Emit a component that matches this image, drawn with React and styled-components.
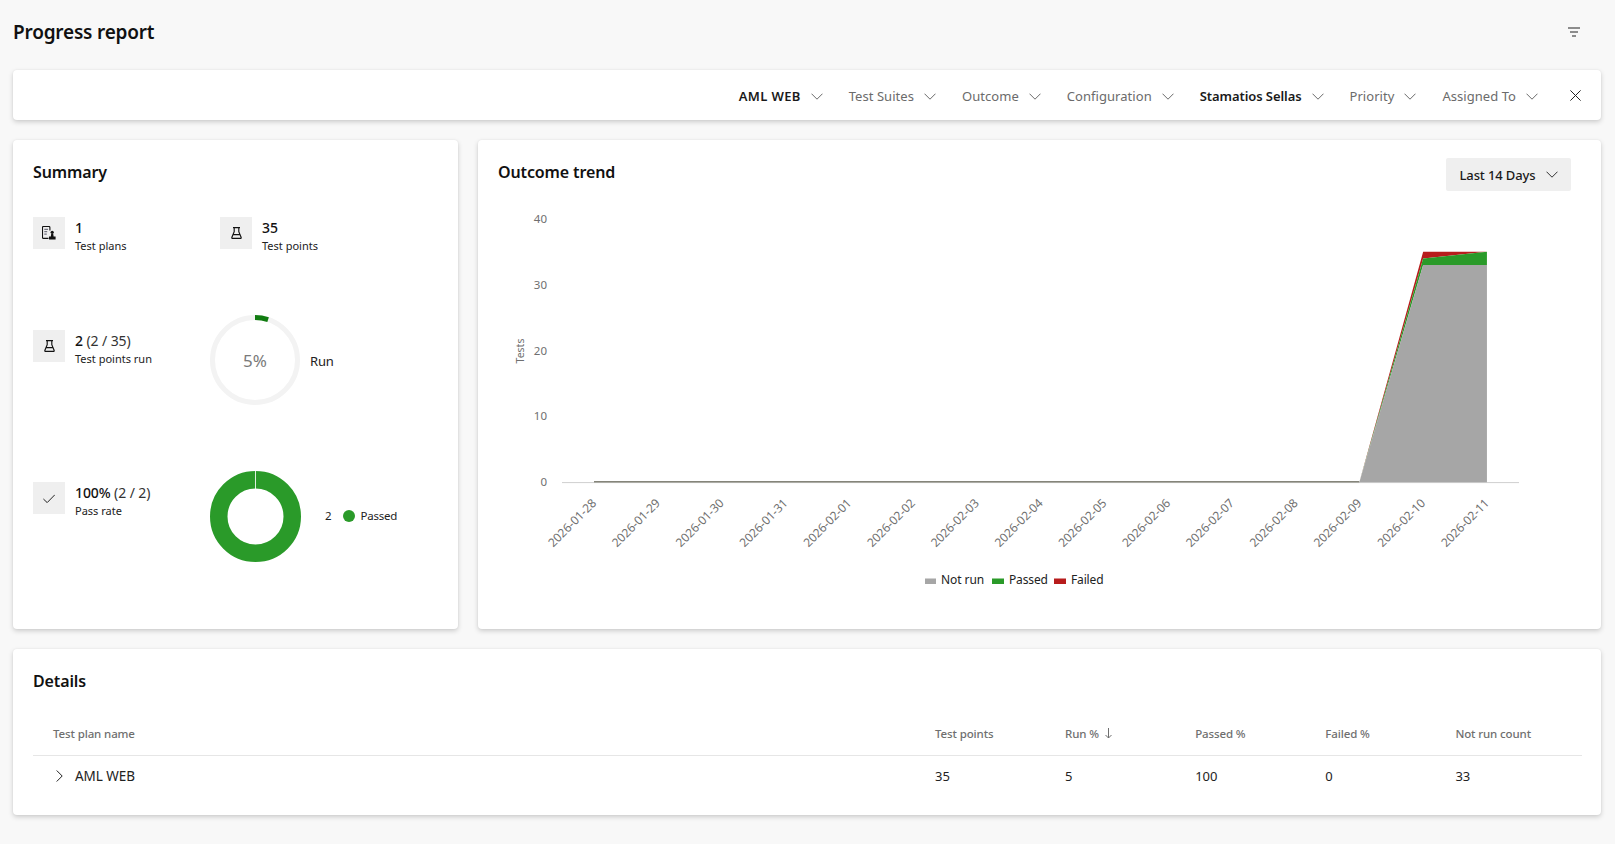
import React from 'react'
import styled, { createGlobalStyle } from 'styled-components'

const GlobalStyle = createGlobalStyle`
  html, body { margin: 0; padding: 0; background: #f8f8f8; height: 100%; overflow: hidden; }
  body { font-family: "Noto Sans", "Open Sans", sans-serif; color: #1a1a1a; }
`

const Page = styled.div`
  padding: 0 14px 0 13px;
  width: 1588px;
`
const Header = styled.header`
  height: 70px;
  display: flex;
  align-items: center;
  justify-content: space-between;
  padding: 0 21px 6px 0;
  box-sizing: border-box;
`
const PageTitle = styled.h1`
  margin: 0;
  font-size: 19px;
  font-weight: 600;
  letter-spacing: -0.2px;
  color: #111;
`
const FilterBar = styled.div`
  height: 50px;
  display: flex;
  align-items: center;
  justify-content: flex-end;
  padding: 0 20px 0 0;
  background: #fff;
  border-radius: 4px;
  box-shadow: 0 2px 5px rgba(0, 0, 0, 0.18), 0 0 2px rgba(0, 0, 0, 0.06);
`
const FilterList = styled.div`
  display: flex;
  gap: 26px;
  margin-right: 32px;
  padding-top: 2px;
`
const FilterItem = styled.div`
  display: flex;
  align-items: center;
  gap: 10px;
  font-size: 13px;
  letter-spacing: ${p => p.$spacing}px;
  font-weight: ${p => (p.$active ? 600 : 400)};
  color: ${p => (p.$active ? '#1a1a1a' : '#6b6b6b')};
`
const CardRow = styled.div`
  display: flex;
  gap: 20px;
  margin-top: 20px;
`
const Card = styled.section`
  background: #fff;
  border-radius: 4px;
  box-shadow: 0 2px 5px rgba(0, 0, 0, 0.18), 0 0 2px rgba(0, 0, 0, 0.06);
  box-sizing: border-box;
`
const SummaryCard = styled(Card)`
  width: 445px;
  height: 489px;
  padding: 20px;
`
const TrendCard = styled(Card)`
  width: 1123px;
  height: 489px;
`
const DetailsCard = styled(Card)`
  height: 166px;
  margin-top: 20px;
  padding: 20px 20px 0;
`
const CardTitle = styled.h2`
  margin: 0;
  font-size: 16px;
  line-height: 24px;
  font-weight: 600;
  letter-spacing: -0.12px;
  color: #111;
`
const SummaryBody = styled.div`
  display: flex;
  flex-direction: column;
  gap: 66px;
  margin-top: 33px;
`
const SummaryRow = styled.div`
  display: flex;
  align-items: flex-start;
`
const Stat = styled.div`
  display: flex;
  gap: 10px;
  height: 32px;
  flex: none;
  width: ${p => p.$width || 177}px;
  margin-top: ${p => p.$top || 0}px;
`
const IconBox = styled.div`
  width: 32px;
  height: 32px;
  flex: none;
  background: #efefef;
  display: flex;
  align-items: center;
  justify-content: center;
`
const StatText = styled.div`
  padding-top: 1px;
`
const StatValue = styled.div`
  font-size: 14px;
  line-height: 20px;
  font-weight: 500;
  letter-spacing: -0.1px;
  color: #111;
`
const StatExtra = styled.span`
  font-size: 14px;
  font-weight: 400;
  letter-spacing: -0.1px;
  color: #333;
`
const StatLabel = styled.div`
  font-size: 11px;
  line-height: 16px;
  letter-spacing: 0;
  color: #222;
`
const DonutWrap = styled.div`
  display: flex;
  align-items: center;
  gap: ${p => p.$gap}px;
`
const Donut = styled.div`
  position: relative;
  width: ${p => p.$size}px;
  height: ${p => p.$size}px;
  flex: none;
`
const DonutCenter = styled.div`
  position: absolute;
  inset: 0;
  display: flex;
  align-items: center;
  justify-content: center;
  font-size: 17px;
  color: #7a7a7a;
`
const RunLabel = styled.span`
  font-size: 13px;
  letter-spacing: -0.15px;
  color: #222;
  padding-top: 2px;
`
const Legend = styled.div`
  display: flex;
  align-items: center;
  font-size: 11.5px;
  letter-spacing: -0.2px;
  color: #222;
  padding-bottom: 2px;
`
const LegendDot = styled.span`
  width: 12px;
  height: 12px;
  border-radius: 50%;
  background: #2a9a29;
  margin: 0 5px 0 12px;
`
const TrendHeader = styled.div`
  height: 51px;
  padding: 18px 30px 0 20px;
  box-sizing: border-box;
  display: flex;
  justify-content: space-between;
  align-items: flex-start;
`
const TrendTitle = styled(CardTitle)`
  padding-top: 2px;
`
const RangeButton = styled.button`
  width: 125px;
  height: 33px;
  border: 0;
  border-radius: 2px;
  background: #efefef;
  display: flex;
  align-items: center;
  justify-content: center;
  gap: 10px;
  font-family: inherit;
  font-size: 13px;
  font-weight: 500;
  letter-spacing: -0.12px;
  color: #1a1a1a;
`
const ChartSvg = styled.svg`
  display: block;
  font-family: "Noto Sans", "Open Sans", sans-serif;
`
const DetailsTitle = styled(CardTitle)`
  margin-bottom: 20px;
`
const TableGrid = styled.div`
  display: grid;
  grid-template-columns: 902px repeat(4, 130.1px) 1fr;
  align-items: center;
  margin-right: -1px;
`
const HeadRow = styled(TableGrid)`
  height: 42px;
  border-bottom: 1px solid #e6e6e6;
  font-size: 11.5px;
  font-weight: 500;
  letter-spacing: -0.12px;
  color: #6f6f6f;
  padding-bottom: 1px;
  box-sizing: content-box;
  margin-top: -1px;
`
const BodyRow = styled(TableGrid)`
  height: 40px;
  font-size: 13px;
  letter-spacing: -0.05px;
  color: #222;
`
const NameHead = styled.div`
  padding-left: 20px;
`
const NameCell = styled.div`
  display: flex;
  align-items: center;
  gap: 12px;
  padding-left: 23px;
  font-size: 13.5px;
`
const SortCell = styled.div`
  display: flex;
  align-items: center;
  gap: 6px;
`

const Chevron = ({ color = '#6b6b6b' }) => (
  <svg width="12" height="7" viewBox="0 0 12 7" fill="none">
    <path d="M0.5 0.7L6 6.2L11.5 0.7" stroke={color} strokeWidth="1" />
  </svg>
)

const Beaker = () => (
  <svg width="11" height="12" viewBox="0 0 11 12" fill="none" stroke="#111" strokeWidth="1.15">
    <path d="M2 0.6H9M3.2 0.6V4.6L0.9 10.2Q0.5 11.4 1.7 11.4H9.3Q10.5 11.4 10.1 10.2L7.8 4.6V0.6M2 7.6H9" />
  </svg>
)

const PlanIcon = () => (
  <svg width="14" height="14" viewBox="0 0 14 14" fill="none">
    <path d="M6.5 12.4H1.4Q0.5 12.4 0.5 11.5V1.4Q0.5 0.5 1.4 0.5H7Q7.9 0.5 7.9 1.4V4.5" stroke="#111" strokeWidth="1.1" />
    <path d="M2.3 3.3H6M2.3 5.7H5.2M2.3 8.1H4.8" stroke="#556" strokeWidth="1" />
    <circle cx="10.2" cy="6.3" r="1.6" fill="#111" />
    <path d="M9.2 7.8H11.2L11.6 10.4H13.6V13.6H7V10.4H8.8Z" fill="#111" />
  </svg>
)

const filters = [
  { name: 'AML WEB', active: true, spacing: 0.35 },
  { name: 'Test Suites', spacing: 0.05 },
  { name: 'Outcome', spacing: 0.05 },
  { name: 'Configuration', spacing: 0.05 },
  { name: 'Stamatios Sellas', active: true, spacing: -0.08 },
  { name: 'Priority', spacing: 0.05 },
  { name: 'Assigned To', spacing: 0.05 },
]

const dates = [
  '2026-01-28', '2026-01-29', '2026-01-30', '2026-01-31', '2026-02-01',
  '2026-02-02', '2026-02-03', '2026-02-04', '2026-02-05', '2026-02-06',
  '2026-02-07', '2026-02-08', '2026-02-09', '2026-02-10', '2026-02-11',
]

const AXIS_Y = 482.3
const UNIT = 6.585
const FIRST_X = 594
const STEP = 63.78
const yFor = v => AXIS_Y - v * UNIT
const xFor = i => FIRST_X + i * STEP

// stacked area between two series, last three dates only
const band = (low, high) => {
  const top = high.map((v, i) => `${xFor(i + 12)},${yFor(v)}`)
  const bottom = low.map((v, i) => `${xFor(i + 12)},${yFor(v)}`).reverse()
  return [...top, ...bottom].join(' ')
}

function TrendChart() {
  return (
    <ChartSvg width="1123" height="438" viewBox="478 191 1123 438">
      {[0, 10, 20, 30, 40].map(v => (
        <text key={v} x="547" y={yFor(v) + 4} textAnchor="end" fontSize="11.5" fill="#6f6f6f">{v}</text>
      ))}
      <text transform="translate(524 351) rotate(-90)" textAnchor="middle" fontSize="10.5" fill="#6f6f6f">Tests</text>
      <line x1="562" x2="1519" y1={AXIS_Y + 0.3} y2={AXIS_Y + 0.3} stroke="#cfcfcf" strokeWidth="1" />
      <line x1={FIRST_X} x2={xFor(12)} y1={AXIS_Y - 0.5} y2={AXIS_Y - 0.5} stroke="#85857a" strokeWidth="1.4" />
      <polygon points={band([0, 34, 35], [0, 35, 35])} fill="#b71c1c" />
      <polygon points={band([0, 33, 33], [0, 34, 35])} fill="#2a9a29" />
      <polygon points={band([0, 0, 0], [0, 33, 33])} fill="#a6a6a6" />
      {dates.map((d, i) => (
        <text
          key={d}
          transform={`translate(${xFor(i) + 3} 504) rotate(-45)`}
          textAnchor="end"
          fontSize="12"
          letterSpacing="-0.08"
          fill="#6f6f6f"
        >
          {d}
        </text>
      ))}
      <rect x="925" y="578.5" width="11" height="5.5" fill="#a6a6a6" />
      <text x="941" y="583.5" fontSize="12" letterSpacing="-0.08" fill="#222">Not run</text>
      <rect x="992" y="578.5" width="12" height="5.5" fill="#2a9a29" />
      <text x="1009" y="583.5" fontSize="12" letterSpacing="-0.15" fill="#222">Passed</text>
      <rect x="1054" y="578.5" width="12" height="5.5" fill="#b71c1c" />
      <text x="1071" y="583.5" fontSize="12" letterSpacing="-0.15" fill="#222">Failed</text>
    </ChartSvg>
  )
}

export default function App() {
  return (
    <Page>
      <GlobalStyle />
      <Header>
        <PageTitle>Progress report</PageTitle>
        <svg width="12" height="10" viewBox="0 0 12 10" fill="none" stroke="#222" strokeWidth="1">
          <path d="M0 1H12M2 5H10M4 9H8" />
        </svg>
      </Header>

      <FilterBar>
        <FilterList>
          {filters.map(f => (
            <FilterItem key={f.name} $active={f.active} $spacing={f.spacing}>
              {f.name}
              <Chevron />
            </FilterItem>
          ))}
        </FilterList>
        <svg width="11" height="11" viewBox="0 0 11 11" fill="none" stroke="#222" strokeWidth="1">
          <path d="M0.4 0.4L10.6 10.6M10.6 0.4L0.4 10.6" />
        </svg>
      </FilterBar>

      <CardRow>
        <SummaryCard>
          <CardTitle>Summary</CardTitle>
          <SummaryBody>
            <SummaryRow>
              <Stat $width={187}>
                <IconBox><PlanIcon /></IconBox>
                <StatText>
                  <StatValue>1</StatValue>
                  <StatLabel>Test plans</StatLabel>
                </StatText>
              </Stat>
              <Stat>
                <IconBox><Beaker /></IconBox>
                <StatText>
                  <StatValue>35</StatValue>
                  <StatLabel>Test points</StatLabel>
                </StatText>
              </Stat>
            </SummaryRow>

            <SummaryRow>
              <Stat $top={15}>
                <IconBox><Beaker /></IconBox>
                <StatText>
                  <StatValue>2 <StatExtra>(2 / 35)</StatExtra></StatValue>
                  <StatLabel>Test points run</StatLabel>
                </StatText>
              </Stat>
              <DonutWrap $gap={10}>
                <Donut $size={90}>
                  <svg width="90" height="90" viewBox="0 0 90 90" fill="none">
                    <circle cx="45" cy="45" r="42.5" stroke="#f3f3f3" strokeWidth="5" />
                    <path d="M45 2.5A42.5 42.5 0 0 1 58.1 4.6" stroke="#107c10" strokeWidth="5" />
                  </svg>
                  <DonutCenter>5%</DonutCenter>
                </Donut>
                <RunLabel>Run</RunLabel>
              </DonutWrap>
            </SummaryRow>

            <SummaryRow>
              <Stat $top={11} $width={176.5}>
                <IconBox>
                  <svg width="12" height="9" viewBox="0 0 12 9" fill="none" stroke="#222" strokeWidth="1">
                    <path d="M0.4 5L4.2 8.6L11.8 0.8" />
                  </svg>
                </IconBox>
                <StatText>
                  <StatValue>100% <StatExtra>(2 / 2)</StatExtra></StatValue>
                  <StatLabel>Pass rate</StatLabel>
                </StatText>
              </Stat>
              <DonutWrap $gap={24.5}>
                <Donut $size={91}>
                  <svg width="91" height="91" viewBox="0 0 91 91" fill="none">
                    <circle cx="45.5" cy="45.5" r="36.75" stroke="#2a9a29" strokeWidth="17.5" />
                    <line x1="45.5" x2="45.5" y1="0" y2="18" stroke="#fff" strokeWidth="1" opacity="0.85" />
                  </svg>
                </Donut>
                <Legend>
                  2
                  <LegendDot />
                  Passed
                </Legend>
              </DonutWrap>
            </SummaryRow>
          </SummaryBody>
        </SummaryCard>

        <TrendCard>
          <TrendHeader>
            <TrendTitle>Outcome trend</TrendTitle>
            <RangeButton>
              Last 14 Days
              <Chevron color="#333" />
            </RangeButton>
          </TrendHeader>
          <TrendChart />
        </TrendCard>
      </CardRow>

      <DetailsCard>
        <DetailsTitle>Details</DetailsTitle>
        <HeadRow>
          <NameHead>Test plan name</NameHead>
          <div>Test points</div>
          <SortCell>
            Run %
            <svg width="7" height="11" viewBox="0 0 7 11" fill="none" stroke="#6f6f6f" strokeWidth="1">
              <path d="M3.5 0V10M0.5 7L3.5 10L6.5 7" />
            </svg>
          </SortCell>
          <div>Passed %</div>
          <div>Failed %</div>
          <div>Not run count</div>
        </HeadRow>
        <BodyRow>
          <NameCell>
            <svg width="7" height="12" viewBox="0 0 7 12" fill="none" stroke="#222" strokeWidth="1">
              <path d="M0.7 0.5L6.2 6L0.7 11.5" />
            </svg>
            AML WEB
          </NameCell>
          <div>35</div>
          <div>5</div>
          <div>100</div>
          <div>0</div>
          <div>33</div>
        </BodyRow>
      </DetailsCard>
    </Page>
  )
}
